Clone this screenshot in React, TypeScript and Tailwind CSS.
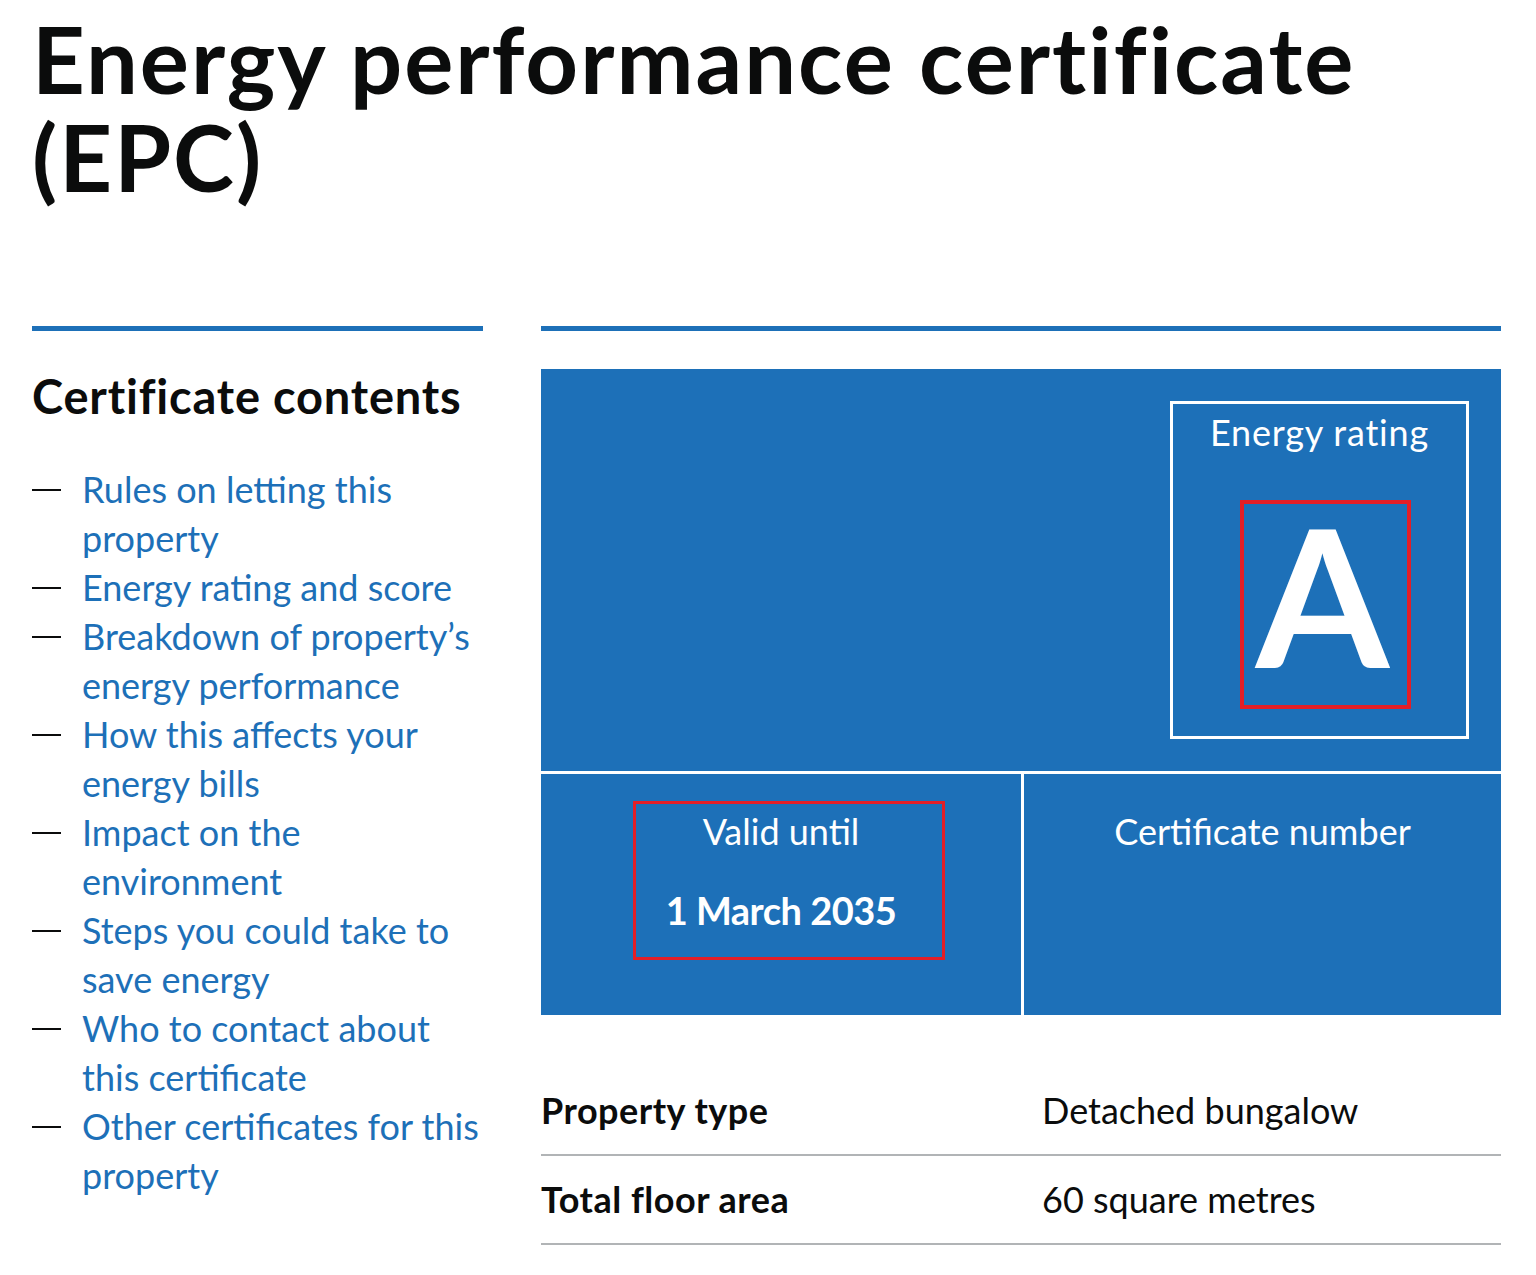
const links = [
  "Rules on letting this property",
  "Energy rating and score",
  "Breakdown of property’s energy performance",
  "How this affects your energy bills",
  "Impact on the environment",
  "Steps you could take to save energy",
  "Who to contact about this certificate",
  "Other certificates for this property",
];

const rows = [
  { key: "Property type", value: "Detached bungalow" },
  { key: "Total floor area", value: "60 square metres" },
];

export default function App() {
  return (
    <div className="min-h-[1275px] bg-white pl-[32px] pt-[10px] font-['Lato',sans-serif] text-[#0b0c0c]">
      <h1 className="w-[1450px] text-[92px] font-bold leading-[98px] tracking-[2px]">
        Energy performance certificate (EPC)
      </h1>

      <div className="mt-[120px] flex gap-[58px]">
        {/* Contents */}
        <nav className="w-[451px] border-t-[5px] border-[#1d70b8]">
          <h2 className="mt-[38px] text-[47px] font-bold leading-[55px] tracking-[0.8px]">Certificate contents</h2>
          <ul className="mt-[41px]">
            {links.map((l) => (
              <li key={l} className="flex text-[36px] leading-[49px]">
                <span className="mt-[24px] h-[2px] w-[29px] shrink-0 bg-[#0b0c0c]" />
                <a href="#" className="ml-[21px] text-[#1d70b8]">
                  {l}
                </a>
              </li>
            ))}
          </ul>
        </nav>

        {/* Certificate */}
        <main className="w-[960px] border-t-[5px] border-[#1d70b8]">
          <div className="mt-[38px] bg-[#1d70b8] text-white">
            <div className="flex h-[402px] justify-end p-[32px]">
              <div className="flex w-[299px] flex-col items-center border-[3px] border-white">
                <p className="mt-[4px] text-[36px] leading-[49px] tracking-[0.8px]">Energy rating</p>
                <div className="ml-[12px] mt-[43px] flex h-[209px] w-[171px] items-center justify-center border-4 border-[#e41e26]">
                  <span className="mt-[-22px] mr-[6px] text-[192px] font-bold leading-none">A</span>
                </div>
              </div>
            </div>
            <div className="flex h-[244px] border-t-[3px] border-white">
              <div className="flex w-[480px] justify-center pl-[16px] pt-[27px]">
                <div className="flex h-[159px] w-[312px] flex-col items-center border-[3px] border-[#e41e26] pr-[16px]">
                  <p className="mt-[3px] text-[36px] leading-[49px]">Valid until</p>
                  <p className="mt-[30px] text-[38px] font-bold leading-[49px] tracking-[-0.5px]">1 March 2035</p>
                </div>
              </div>
              <div className="flex flex-1 justify-center border-l-[3px] border-white pt-[33px]">
                <p className="text-[36px] leading-[49px]">Certificate number</p>
              </div>
            </div>
          </div>

          <dl className="mt-[52px]">
            {rows.map((r) => (
              <div key={r.key} className="flex border-b-2 border-[#b1b4b6] py-[19px] text-[36px] leading-[49px]">
                <dt className="w-[501px] font-bold tracking-[0.5px]">{r.key}</dt>
                <dd>{r.value}</dd>
              </div>
            ))}
          </dl>
        </main>
      </div>
    </div>
  );
}
